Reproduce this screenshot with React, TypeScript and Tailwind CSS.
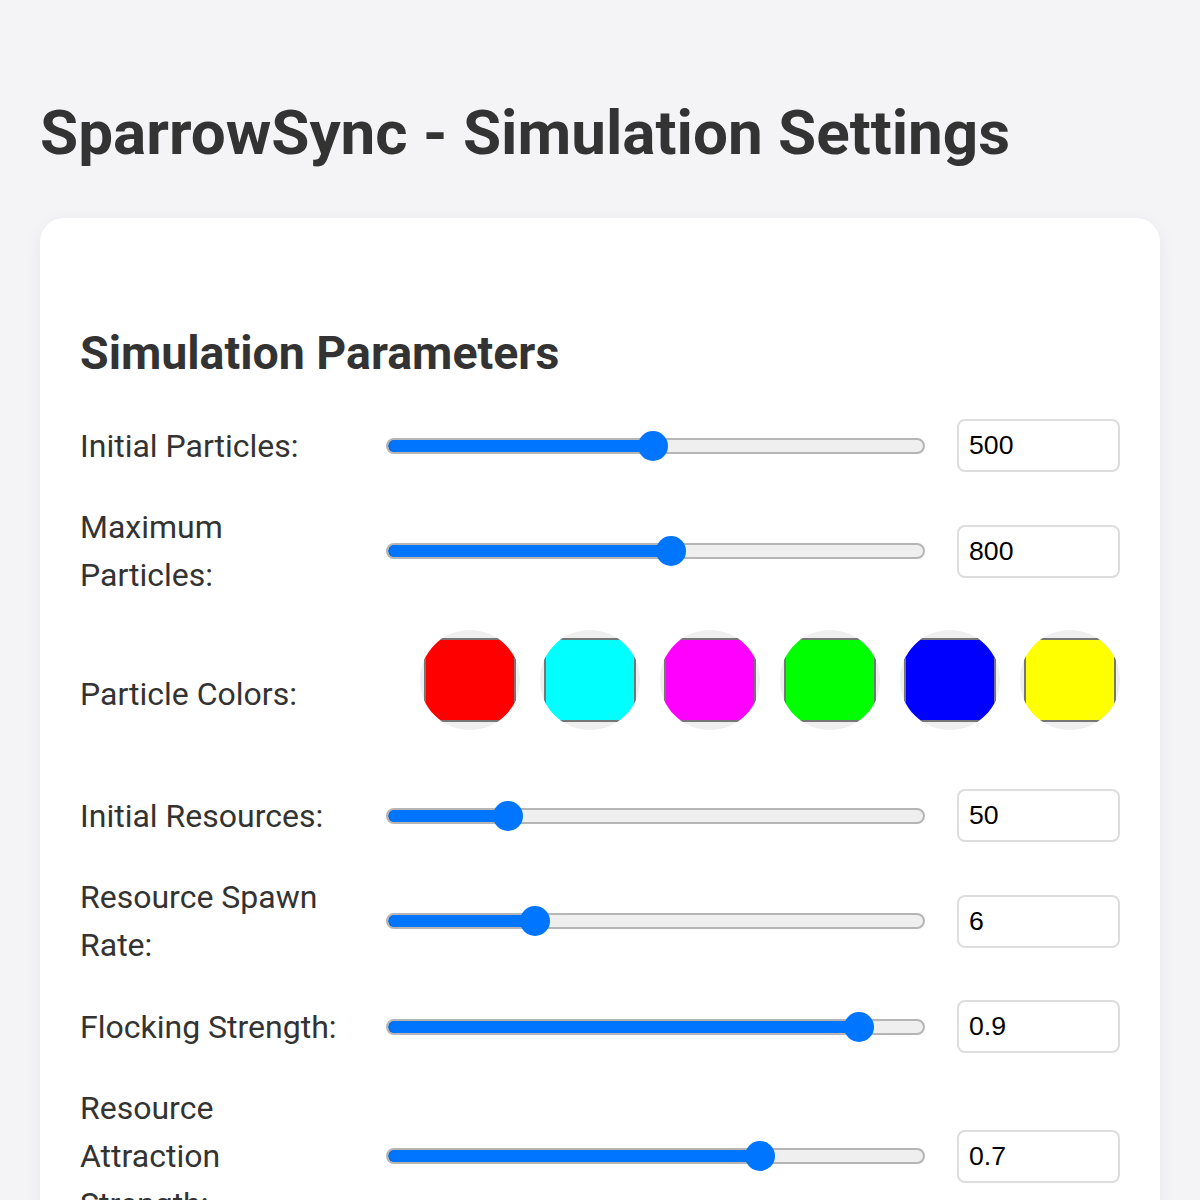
import React from "react";

type SliderRow = {
  label: string;
  value: string;
  frac: number;
};

const topRows: SliderRow[] = [
  { label: "Initial Particles:", value: "500", frac: 0.495 },
  { label: "Maximum Particles:", value: "800", frac: 0.53 },
];

const bottomRows: SliderRow[] = [
  { label: "Initial Resources:", value: "50", frac: 0.211 },
  { label: "Resource Spawn Rate:", value: "6", frac: 0.263 },
  { label: "Flocking Strength:", value: "0.9", frac: 0.9 },
  { label: "Resource Attraction Strength:", value: "0.7", frac: 0.705 },
];

const colors = ["#ff0000", "#00ffff", "#ff00ff", "#00ff00", "#0000ff", "#ffff00"];

function Slider({ frac }: { frac: number }) {
  // thumb is 30px wide, so it travels over (width - 30px)
  const pos = `calc(15px + (100% - 30px) * ${frac})`;
  return (
    <div className="relative h-[30px] flex items-center">
      <div className="relative w-full h-[16px] rounded-full bg-[#efefef] border-2 border-[#b5b5b5] overflow-hidden">
        <div
          className="absolute left-0 top-[-2px] bottom-[-2px] bg-[#0075ff] border-2 border-[#1668d4] rounded-full"
          style={{ width: pos }}
        />
      </div>
      <div
        className="absolute top-0 w-[30px] h-[30px] -ml-[15px] rounded-full bg-[#0075ff]"
        style={{ left: pos }}
      />
    </div>
  );
}

function Row({ row }: { row: SliderRow }) {
  return (
    <div className="flex items-center">
      <label className="w-[270px] shrink-0 text-[32px] leading-[48px] text-[#333]">{row.label}</label>
      <div className="flex-1 ml-[36px] mr-[32px]">
        <Slider frac={row.frac} />
      </div>
      <input
        type="text"
        readOnly
        value={row.value}
        className="w-[163px] h-[53px] shrink-0 border-2 border-[#dddddd] rounded-[8px] px-[10px] bg-white text-black text-[26.67px] outline-none"
        style={{ fontFamily: '"Liberation Sans", Arial, sans-serif' }}
      />
    </div>
  );
}

export default function App() {
  return (
    <div
      className="min-h-screen bg-[#f4f4f6] px-[40px] pt-[95px] text-[#333]"
      style={{ fontFamily: "Roboto, 'Noto Sans', sans-serif" }}
    >
      <h1 className="text-[62px] leading-[76px] font-bold text-[#333] mb-[47px]">
        SparrowSync - Simulation Settings
      </h1>

      <div className="bg-white rounded-[24px] shadow-[0_4px_16px_rgba(0,0,0,0.06)] px-[40px] pt-[106px] pb-[60px]">
        <h2 className="text-[46.5px] leading-[58px] font-bold text-[#333] mb-[37px]">Simulation Parameters</h2>

        <div className="flex flex-col gap-[31px]">
          {topRows.map((r) => (
            <Row key={r.label} row={r} />
          ))}

          <div className="flex items-center">
            <label className="w-[270px] shrink-0 text-[32px] leading-[48px] text-[#333]">Particle Colors:</label>
            <div className="flex-1 ml-[36px] h-[128px] flex justify-end items-start gap-[20px]">
              {colors.map((c) => (
                <div
                  key={c}
                  className="w-[100px] h-[100px] rounded-full bg-[#efefef] overflow-hidden px-[4px] py-[8px]"
                >
                  <div className="w-full h-full border-2 border-[#767676]" style={{ backgroundColor: c }} />
                </div>
              ))}
            </div>
          </div>

          {bottomRows.map((r) => (
            <Row key={r.label} row={r} />
          ))}
        </div>
      </div>
    </div>
  );
}
